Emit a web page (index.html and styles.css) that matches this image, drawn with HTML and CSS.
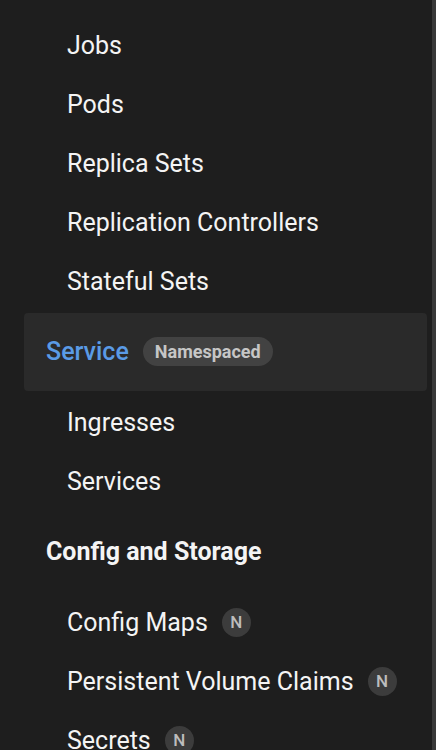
FILE: index.html
```html
<!DOCTYPE html>
<html>
<head>
<meta charset="utf-8">
<link rel="stylesheet" href="styles.css">
</head>
<body>
<div class="frame">
  <nav class="nav">
    <div class="item">Jobs</div>
    <div class="item">Pods</div>
    <div class="item">Replica Sets</div>
    <div class="item">Replication Controllers</div>
    <div class="item">Stateful Sets</div>
    <div class="group group-active">
      <span class="group-title">Service</span>
      <span class="pill">Namespaced</span>
    </div>
    <div class="item">Ingresses</div>
    <div class="item">Services</div>
    <div class="group">
      <span class="group-title">Config and Storage</span>
    </div>
    <div class="item">Config Maps <span class="badge">N</span></div>
    <div class="item">Persistent Volume Claims <span class="badge">N</span></div>
    <div class="item">Secrets <span class="badge">N</span></div>
  </nav>
  <div class="track"></div>
</div>
</body>
</html>
```

FILE: styles.css
```css
html, body {
  margin: 0;
  padding: 0;
  background: #1e1e1e;
  height: 100%;
  overflow: hidden;
}
.frame {
  display: flex;
  height: 750px;
}
.nav {
  flex: 1;
  padding: 15.5px 5px 0 24px;
  display: flex;
  flex-direction: column;
  font-family: Roboto, "Liberation Sans", sans-serif;
}
.track {
  width: 4px;
  background: #393939;
}
.item {
  flex: none;
  height: 59px;
  display: flex;
  align-items: center;
  gap: 14px;
  padding-left: 43px;
  font-size: 25px;
  color: #f4f4f4;
  white-space: nowrap;
}
.group {
  flex: none;
  height: 78px;
  margin: 2px 0;
  display: flex;
  align-items: center;
  gap: 14px;
  padding-left: 22px;
  border-radius: 4px;
}
.group-active {
  background: #2a2a2a;
}
.group-title {
  font-size: 25px;
  font-weight: 700;
  color: #f4f4f4;
}
.group-active .group-title {
  color: #5a9be6;
  font-weight: 500;
}
.pill {
  background: #424242;
  color: #c6c6c6;
  font-size: 18px;
  font-weight: 700;
  padding: 0 12px;
  height: 29px;
  line-height: 29px;
  border-radius: 15px;
}
.badge {
  width: 29px;
  height: 29px;
  border-radius: 50%;
  background: #3c3c3c;
  color: #bdbdbd;
  font-size: 17px;
  font-weight: 500;
  display: flex;
  align-items: center;
  justify-content: center;
}
```
